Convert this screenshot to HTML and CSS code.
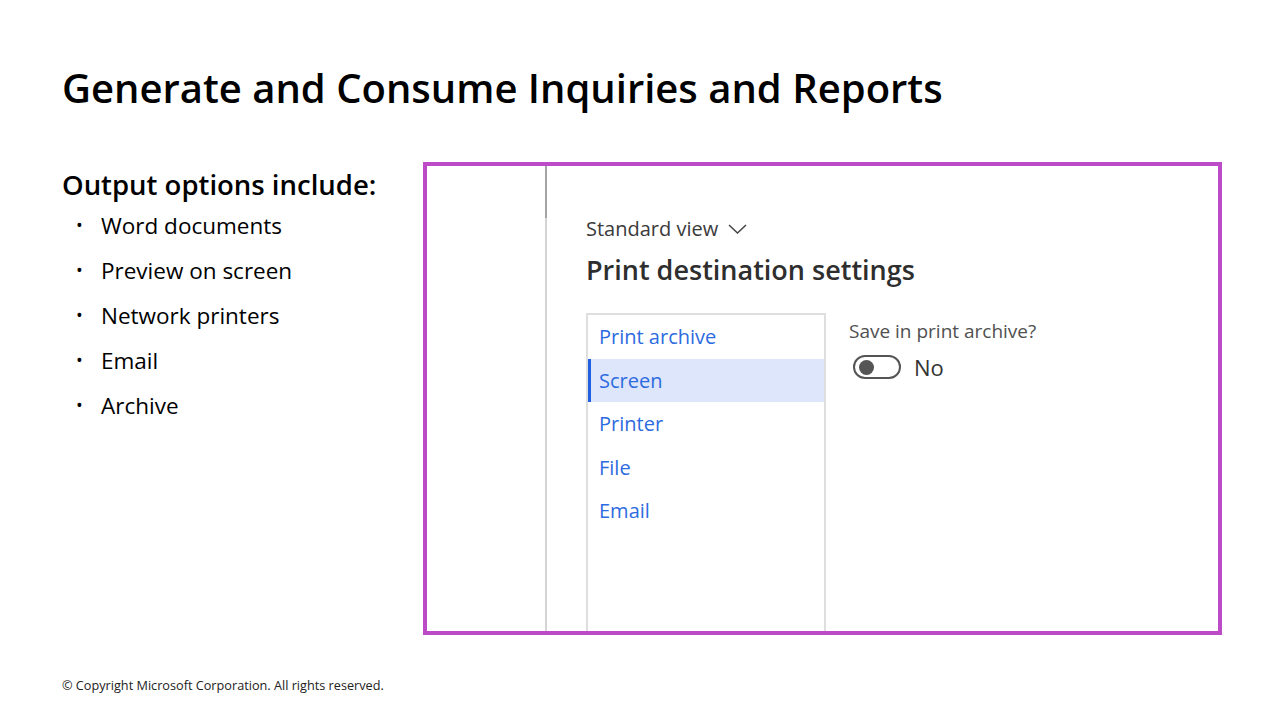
FILE: index.html
```html
<!DOCTYPE html>
<html lang="en">
<head>
    <meta charset="UTF-8">
    <title>Generate and Consume Inquiries and Reports</title>
    <link rel="stylesheet" href="styles.css">
</head>
<body>
    <div class="slide">
        <h1 class="title">Generate and Consume Inquiries and Reports</h1>

        <div class="content">
            <div class="points">
                <h2>Output options include:</h2>
                <ul>
                    <li>Word documents</li>
                    <li>Preview on screen</li>
                    <li>Network printers</li>
                    <li>Email</li>
                    <li>Archive</li>
                </ul>
            </div>

            <div class="shot">
                <div class="rail"><div class="thumb"></div></div>
                <div class="pane">
                    <div class="view">Standard view
                        <svg width="19" height="10" viewBox="0 0 19 10"><path d="M1 1 L9.5 9 L18 1" fill="none" stroke="#444" stroke-width="1.5"/></svg>
                    </div>
                    <div class="pane-title">Print destination settings</div>
                    <div class="settings">
                        <ul class="dest-list">
                            <li>Print archive</li>
                            <li class="active">Screen</li>
                            <li>Printer</li>
                            <li>File</li>
                            <li>Email</li>
                        </ul>
                        <div class="field">
                            <div class="field-label">Save in print archive?</div>
                            <div class="toggle-row">
                                <span class="toggle"><span class="knob"></span></span>
                                <span class="toggle-text">No</span>
                            </div>
                        </div>
                    </div>
                </div>
            </div>
        </div>

        <div class="footer">© Copyright Microsoft Corporation. All rights reserved.</div>
    </div>
</body>
</html>
```

FILE: styles.css
```css
* { box-sizing: border-box; }
body { margin: 0; background: #fff; font-family: "Open Sans", "Noto Sans", Arial, sans-serif; color: #000; }
.slide { width: 1280px; height: 720px; padding: 58px 0 0 62px; display: flex; flex-direction: column; }

.title { margin: 0; font-size: 40px; font-weight: 600; line-height: 60px; }

.content { display: flex; margin-top: 44px; }
.points { width: 361px; }
.points h2 { margin: 5px 0 0; font-size: 27.5px; font-weight: 600; line-height: 36px; }
.points ul { margin: 0; padding: 0 0 0 14px; list-style: none; }
.points li { font-size: 22.5px; line-height: 45px; }
.points li::before { content: "•"; display: inline-block; width: 25px; font-size: 18px; vertical-align: 2px; }

.shot { width: 799px; height: 473px; border: 4px solid #bd4bc8; display: flex; overflow: hidden; }
.rail { width: 120px; border-right: 2px solid #d4d4d4; }
.thumb { margin-left: 118px; width: 2px; height: 52px; background: #a4a4a4; margin-right: -2px; }
.pane { flex: 1; padding: 50px 0 0 39px; color: #333; }
.view { font-size: 20px; line-height: 26px; display: flex; align-items: center; gap: 10px; color: #3a3a3a; }
.pane-title { margin-top: 10px; font-size: 27px; line-height: 36px; font-weight: 600; color: #2e2e2e; }
.settings { display: flex; margin-top: 25px; }

.dest-list { margin: 0; padding: 0; list-style: none; width: 240px; height: 330px; border: 2px solid #dedede; }
.dest-list li { height: 43.5px; line-height: 43px; padding-left: 8px; font-size: 20px; color: #2d6be0; border-left: 3px solid transparent; }
.dest-list li.active { background: #dde6fa; border-left-color: #1f5fe0; }

.field { padding: 5px 0 0 23px; }
.field-label { font-size: 19px; line-height: 26px; color: #505050; }
.toggle-row { display: flex; align-items: center; gap: 13px; margin-top: 8px; margin-left: 4px; height: 30px; }
.toggle { width: 48px; height: 24px; border: 2px solid #555; border-radius: 12px; padding: 3px 0 0 4px; }
.knob { display: block; width: 15px; height: 15px; border-radius: 50%; background: #555; }
.toggle-text { font-size: 22px; color: #333; }

.footer { margin-top: auto; margin-bottom: 26px; font-size: 12.7px; color: #222; }
```
